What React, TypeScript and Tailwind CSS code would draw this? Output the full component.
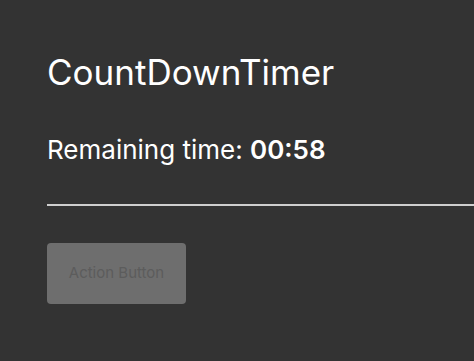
import React from "react";

export default function App() {
  return (
    <div className="min-h-[361px] w-full bg-[#333333] pl-[47px] pt-[50px] font-['Inter',sans-serif] text-white">
      <h1 className="text-[35px] leading-[44px] font-normal">CountDownTimer</h1>
      <p className="mt-[40px] text-[26px] leading-[32px]">
        Remaining time: <span className="font-semibold">00:58</span>
      </p>
      <div className="mt-[38px] h-[2px] bg-[#cfcfcf]" />
      <button
        disabled
        className="mt-[37px] flex h-[61px] w-[139px] items-center justify-center rounded-[4px] bg-[#6e6e6e] text-[15px] text-[#5c5c5c]"
      >
        Action Button
      </button>
    </div>
  );
}
